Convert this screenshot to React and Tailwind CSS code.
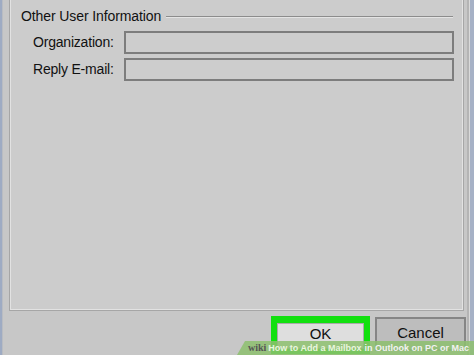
import React from "react";

export default function App() {
  return (
    <div
      className="relative w-[474px] h-[355px] overflow-hidden bg-[#c7c7c7] flex text-[#111]"
      style={{ fontFamily: '"Liberation Sans", Arial, sans-serif' }}
    >
      {/* left window edge */}
      <div className="w-[2px] bg-[#9eabc3]" />
      <div className="w-[1px] bg-[#b9bcc2]" />

      <div className="flex-1 flex flex-col">
        {/* main panel */}
        <div className="ml-[6px] mr-[3px] h-[311px] bg-[#cccccc] border-l border-r border-b border-[#a6a6a6] shadow-[inset_1px_0_0_#e2e2e2,inset_-1px_-1px_0_#e2e2e2]">
          <div className="flex items-center pl-[11px] pr-[10px] pt-[8px]">
            <span className="text-[14px] leading-[17px] tracking-[-0.1px]">Other User Information</span>
            <div className="flex-1 ml-[5px] mt-[1px] h-[2px] border-t border-[#8c8c8c] border-b-[#e4e4e4] border-b" />
          </div>

          <div className="flex flex-col gap-[4px] mt-[6px] pr-[9px]">
            <div className="flex items-center">
              <span className="w-[114px] pl-[23px] text-[14px] tracking-[-0.2px]">Organization:</span>
              <div className="flex-1 h-[23px] border-2 border-[#7d7d7d] bg-[#cdcdcd]" />
            </div>
            <div className="flex items-center">
              <span className="w-[114px] pl-[23px] text-[14px] tracking-[-0.2px]">Reply E-mail:</span>
              <div className="flex-1 h-[23px] border-2 border-[#7d7d7d] bg-[#cdcdcd]" />
            </div>
          </div>
        </div>

        {/* buttons */}
        <div className="flex justify-end items-start gap-[5px] mt-[5px] mr-[1px]">
          <div className="w-[99px] h-[38px] border-[6px] border-[#12e00f] bg-[#12e00f]">
            <button className="w-full h-full bg-[#dedede] border border-[#a9a9a9] text-[15px] leading-none pb-[4px]">
              OK
            </button>
          </div>
          <button className="w-[91px] h-[34px] mt-[1px] bg-[#bdbdbd] border-2 border-[#858585] text-[15px] leading-none pb-[3px]">
            Cancel
          </button>
        </div>
      </div>

      {/* right window edge */}
      <div className="w-[2px] bg-[#b4b4b4]" />
      <div className="w-[1px] bg-[#dadada]" />
      <div className="w-[4px] bg-[#a6b1c6]" />

      {/* watermark */}
      <div className="absolute left-[237px] right-0 bottom-0 h-[14px] bg-[#8dbf6e]/85 [clip-path:polygon(8px_0,100%_0,100%_100%,0_100%)] flex items-center pl-[11px] text-[9px] font-bold leading-none whitespace-nowrap">
        <span className="text-[#555] mr-[2px] text-[10px]" style={{ fontFamily: '"Liberation Serif", serif' }}>wiki</span>
        <span className="text-[#e9f6df]">How to Add a Mailbox</span>
        <span className="text-[#f2f2f2] ml-[3px]">in Outlook on PC or Mac</span>
      </div>
    </div>
  );
}
